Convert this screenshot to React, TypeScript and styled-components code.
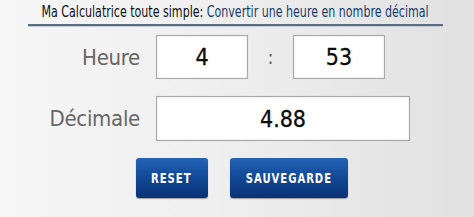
import React, { useState } from "react";
import styled, { createGlobalStyle } from "styled-components";

const GlobalStyle = createGlobalStyle`
  html, body {
    margin: 0;
    padding: 0;
  }
  body {
    font-family: "DejaVu Sans Condensed", "Liberation Sans", sans-serif;
  }
`;

const Page = styled.div`
  width: 474px;
  height: 217px;
  box-sizing: border-box;
  background: linear-gradient(to right, #f6f6f6 0%, #efefef 45%, #e1e1e1 100%);
  display: flex;
  flex-direction: column;
  align-items: center;
  padding-top: 3px;
  overflow: hidden;
`;

const Title = styled.div`
  width: 415px;
  margin-left: -3px;
  text-align: center;
  white-space: nowrap;
  font-size: 15px;
  line-height: 19px;
  color: #111;
  padding-bottom: 2px;
  border-bottom: 2px solid #5b6d82;
  box-shadow: 0 1px 0 #c4ccd6;
`;

// squeeze the text to match the narrow title face
const Squeeze = styled.span<{ $k: number }>`
  display: inline-block;
  transform: scaleX(${(p) => p.$k});
  transform-origin: center;
  margin: 0 -40px;
`;

const TitleAccent = styled.span`
  color: #1b3c6c;
`;

const Form = styled.div`
  display: grid;
  grid-template-columns: 140px auto;
  column-gap: 16px;
  row-gap: 17px;
  align-items: center;
  margin-top: 9px;
  align-self: flex-start;
`;

const Label = styled.div`
  text-align: right;
  font-size: 22px;
  color: #666;
  letter-spacing: -0.3px;
`;

const TimeRow = styled.div`
  display: flex;
  align-items: center;
`;

const Colon = styled.div`
  width: 45px;
  text-align: center;
  font-size: 20px;
  color: #666;
`;

const ValueBox = styled.div<{ $w: number; $h: number }>`
  width: ${(p) => p.$w}px;
  height: ${(p) => p.$h}px;
  box-sizing: border-box;
  background: #fff;
  border: 1px solid #a9a9a9;
  box-shadow: inset 0 0 2px rgba(0, 0, 0, 0.18), 0 0 1px rgba(0, 0, 0, 0.1);
  display: flex;
  align-items: center;
  justify-content: center;
  font-size: 23px;
  color: #0b0b0b;
  -webkit-text-stroke: 0.3px #0b0b0b;
`;

const Buttons = styled.div`
  display: flex;
  gap: 22px;
  margin-top: 17px;
  margin-left: 9px;
`;

const Button = styled.button<{ $w: number }>`
  width: ${(p) => p.$w}px;
  height: 40px;
  border: none;
  border-radius: 3px;
  background: linear-gradient(to bottom, #2563b6 0%, #114795 50%, #0a3274 100%);
  box-shadow: 0 1px 1px rgba(0, 0, 0, 0.35);
  color: #fff;
  font-family: "DejaVu Sans Condensed", sans-serif;
  font-weight: bold;
  font-size: 14px;
  letter-spacing: 1.2px;
  cursor: pointer;
  padding: 0;
  overflow: hidden;
`;

export default function App() {
  const [heure, setHeure] = useState(4);
  const [minutes, setMinutes] = useState(53);
  const decimale = (heure + minutes / 60).toFixed(2);

  return (
    <>
      <GlobalStyle />
      <Page>
        <Title>
          <Squeeze $k={0.82}>
            Ma Calculatrice toute simple: <TitleAccent>Convertir une heure en nombre décimal</TitleAccent>
          </Squeeze>
        </Title>
        <Form>
          <Label>Heure</Label>
          <TimeRow>
            <ValueBox $w={92} $h={44}>{heure}</ValueBox>
            <Colon>:</Colon>
            <ValueBox $w={92} $h={44}>{minutes}</ValueBox>
          </TimeRow>
          <Label>Décimale</Label>
          <ValueBox $w={254} $h={45}>{decimale}</ValueBox>
        </Form>
        <Buttons>
          <Button
            $w={72}
            onClick={() => {
              setHeure(0);
              setMinutes(0);
            }}
          >
            <Squeeze $k={0.8}>RESET</Squeeze>
          </Button>
          <Button $w={118}>
            <Squeeze $k={0.8}>SAUVEGARDE</Squeeze>
          </Button>
        </Buttons>
      </Page>
    </>
  );
}
